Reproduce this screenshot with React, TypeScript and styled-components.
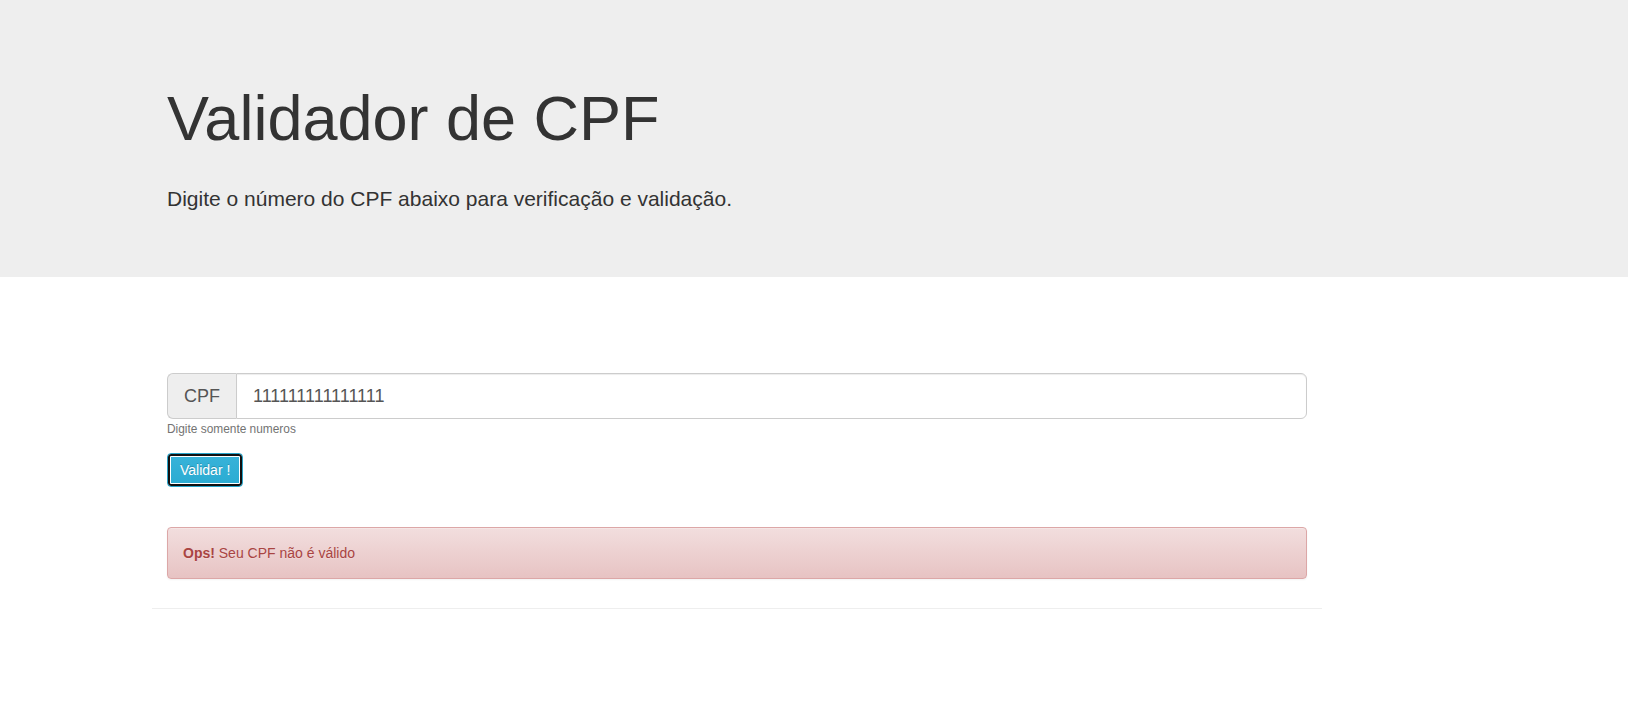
import React from 'react';
import styled, { createGlobalStyle } from 'styled-components';

const GlobalStyle = createGlobalStyle`
  * {
    box-sizing: border-box;
  }

  body {
    margin: 0;
    background: #fff;
    color: #333;
    font-family: 'Liberation Sans', Arial, sans-serif;
    font-size: 14px;
    line-height: 1.42857143;
  }
`;

const Jumbotron = styled.header`
  background-color: #eee;
  padding: 48px 0;
`;

const Container = styled.div<{ flush?: boolean }>`
  width: 1170px;
  margin-left: 152px;
  padding: ${(props) => (props.flush ? '0' : '0 15px')};
`;

const Content = styled.div`
  padding: 0 15px;
`;

const Title = styled.h1`
  margin: 35.5px 0 31.6px;
  font-size: 63px;
  font-weight: 500;
  line-height: 1.1;
  color: #333;
`;

const Lead = styled.p`
  margin: 0 0 15px;
  font-size: 21px;
  line-height: 30px;
  font-weight: 400;
`;

const Main = styled.main`
  padding-top: 96px;
`;

const InputGroup = styled.div`
  display: flex;
  width: 100%;
  height: 46px;
`;

const Addon = styled.span`
  display: flex;
  align-items: center;
  justify-content: center;
  padding: 0 16px;
  font-size: 18px;
  color: #555;
  background-color: #eee;
  border: 1px solid #ccc;
  border-right: 0;
  border-radius: 6px 0 0 6px;
`;

const TextInput = styled.input`
  flex: 1;
  height: 46px;
  padding: 10px 16px;
  font-family: 'Liberation Sans', Arial, sans-serif;
  font-size: 18px;
  line-height: 1.3333333;
  color: #555;
  background: #fff;
  border: 1px solid #ccc;
  border-radius: 0 6px 6px 0;
  box-shadow: inset 0 1px 1px rgba(0, 0, 0, 0.075);
  outline: none;
`;

const HelpBlock = styled.small`
  display: block;
  margin-top: 1.5px;
  font-size: 11.9px;
  line-height: 17px;
  color: #737373;
`;

const ValidateButton = styled.button`
  display: block;
  margin-top: 15.5px;
  height: 34px;
  padding: 6px 12px;
  font-family: 'Liberation Sans', Arial, sans-serif;
  font-size: 14px;
  line-height: 20px;
  color: #fff;
  text-shadow: 0 -1px 0 rgba(0, 0, 0, 0.2);
  background: linear-gradient(to bottom, #38b3d9 0%, #2aabd2 100%);
  border: 1px solid #28a4c9;
  border-radius: 4px;
  box-shadow: inset 0 0 0 2px #101010, inset 0 0 0 3px #fff;
  cursor: pointer;
`;

const Alert = styled.div`
  margin-top: 40px;
  padding: 15px;
  line-height: 20px;
  color: #a94442;
  text-shadow: 0 1px 0 rgba(255, 255, 255, 0.2);
  background: linear-gradient(to bottom, #f2dede 0%, #e7c3c3 100%);
  border: 1px solid #dca7a7;
  border-radius: 4px;
  box-shadow: inset 0 1px 0 rgba(255, 255, 255, 0.25), 0 1px 2px rgba(0, 0, 0, 0.05);
`;

const Divider = styled.hr`
  margin: 28.5px 0 20px;
  border: 0;
  border-top: 1px solid #eee;
`;

export default function App() {
  return (
    <>
      <GlobalStyle />
      <Jumbotron>
        <Container>
          <Title>Validador de CPF</Title>
          <Lead>Digite o número do CPF abaixo para verificação e validação.</Lead>
        </Container>
      </Jumbotron>
      <Main>
        <Container flush>
          <Content>
            <InputGroup>
              <Addon>CPF</Addon>
              <TextInput type="text" defaultValue="111111111111111" />
            </InputGroup>
            <HelpBlock>Digite somente numeros</HelpBlock>
            <ValidateButton type="button">Validar !</ValidateButton>
            <Alert>
              <strong>Ops!</strong> Seu CPF não é válido
            </Alert>
          </Content>
          <Divider />
        </Container>
      </Main>
    </>
  );
}
